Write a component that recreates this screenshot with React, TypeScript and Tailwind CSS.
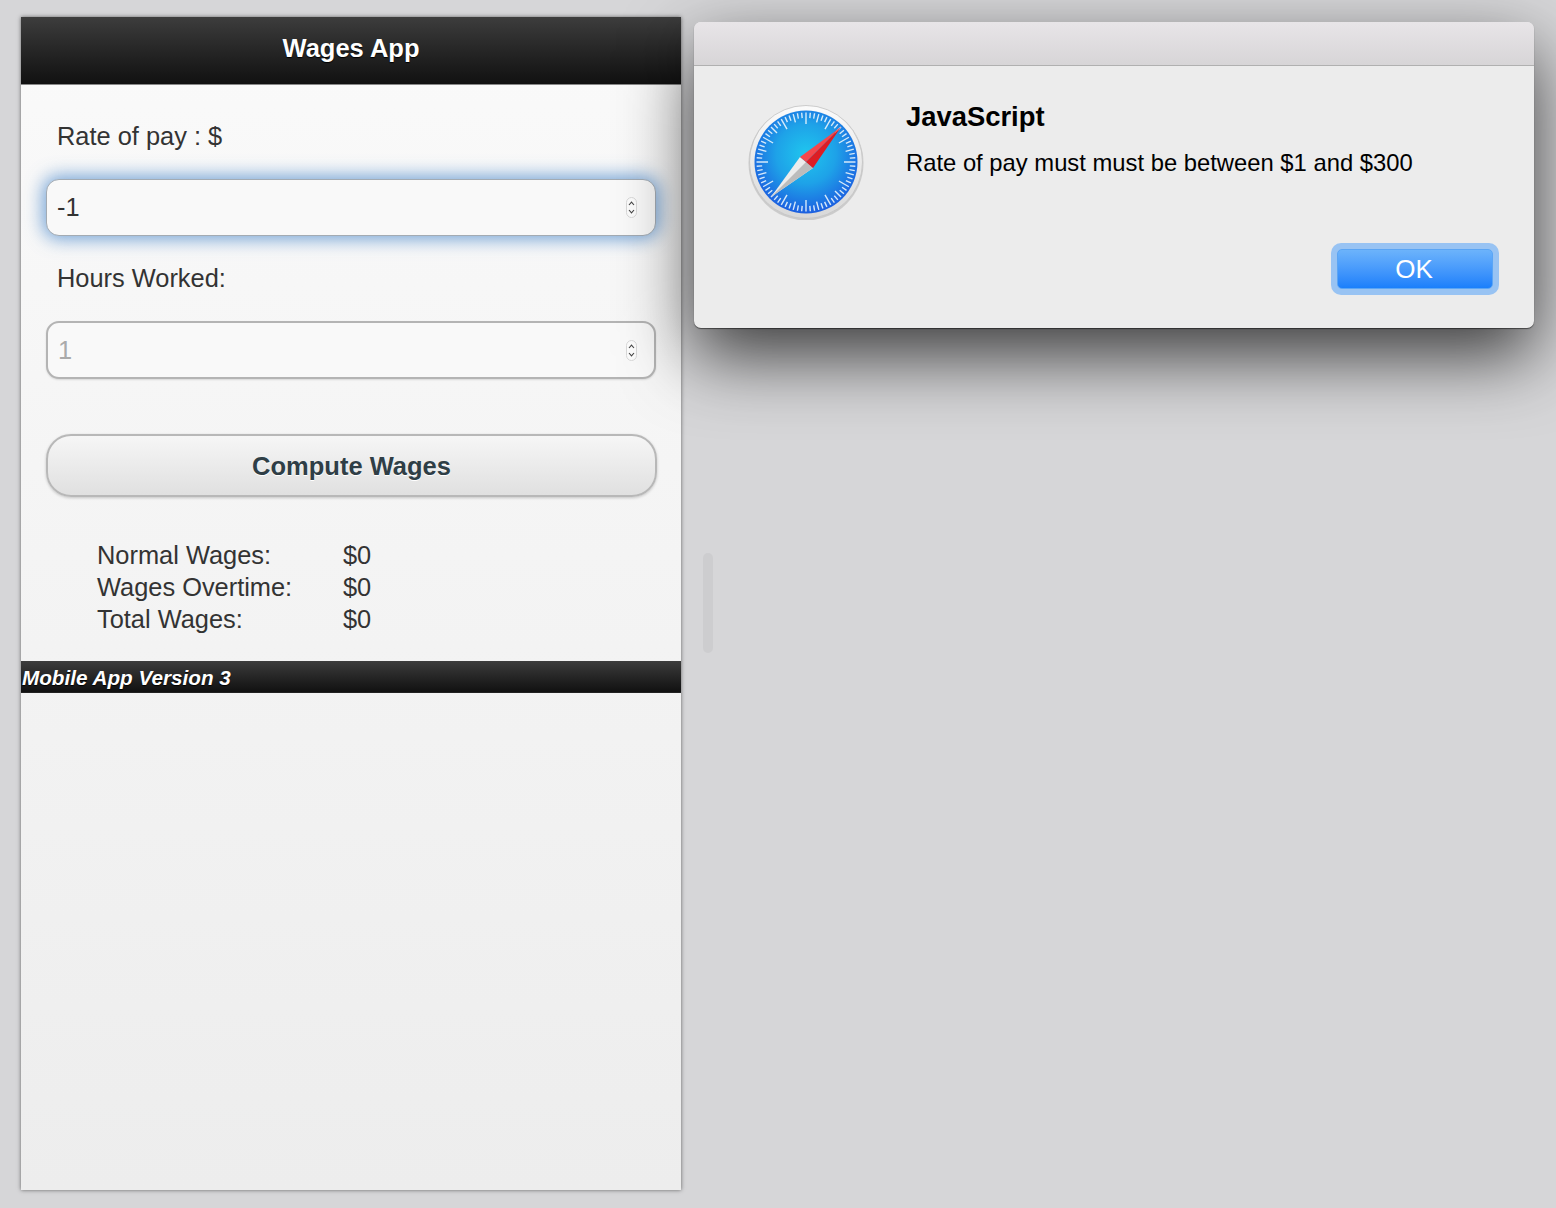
const font = "font-['Liberation_Sans',Arial,sans-serif]";

function Spinner() {
  return (
    <svg width="11" height="21" viewBox="0 0 11 21" className="shrink-0">
      <rect x="0.5" y="0.5" width="10" height="20" rx="5" fill="#fcfcfc" stroke="#d8d8d8" />
      <path d="M3 8 5.5 5.2 8 8" fill="none" stroke="#444" strokeWidth="1.1" />
      <path d="M3 13 5.5 15.8 8 13" fill="none" stroke="#444" strokeWidth="1.1" />
    </svg>
  );
}

function NumberField({ value, focused }: { value: string; focused?: boolean }) {
  return (
    <div
      className={
        focused
          ? "flex h-[57px] w-[610px] items-center justify-between rounded-[13px] border border-[#a3abb3] bg-[#f9f9f9] pl-[10px] pr-[18px] shadow-[0_0_18px_3px_rgba(80,140,205,0.8)]"
          : "flex h-[58px] w-[610px] items-center justify-between rounded-[13px] border-2 border-[#b4b4b4] bg-[#f9f9f9] pl-[10px] pr-[17px] shadow-[0_1px_2px_rgba(0,0,0,0.12)]"
      }
    >
      <span className={focused ? "text-[25.4px] text-[#333]" : "text-[25.4px] text-[#aaa]"}>{value}</span>
      <Spinner />
    </div>
  );
}

function Compass() {
  const ticks = Array.from({ length: 72 }, (_, i) => i * 5);
  return (
    <svg width="116" height="116" viewBox="0 0 116 116">
      <defs>
        <radialGradient id="dial" cx="50%" cy="42%" r="58%">
          <stop offset="0%" stopColor="#1fc6ee" />
          <stop offset="50%" stopColor="#1ea2e8" />
          <stop offset="100%" stopColor="#1c5fe0" />
        </radialGradient>
        <linearGradient id="rim" x1="0" y1="0" x2="0" y2="1">
          <stop offset="0%" stopColor="#fbfbfb" />
          <stop offset="100%" stopColor="#d8d8d8" />
        </linearGradient>
      </defs>
      <circle cx="58" cy="59" r="57.5" fill="#8f8f8f" opacity="0.35" />
      <circle cx="58" cy="58" r="56.5" fill="url(#rim)" stroke="#c4c4c4" strokeWidth="0.8" />
      <circle cx="58" cy="58" r="51.5" fill="url(#dial)" />
      {ticks.map((deg) => (
        <line
          key={deg}
          x1="58"
          y1="8.5"
          x2="58"
          y2={deg % 30 === 0 ? 20 : deg % 15 === 0 ? 17 : 14}
          stroke="#eaf5fc"
          strokeOpacity="0.9"
          strokeWidth="1.4"
          transform={`rotate(${deg} 58 58)`}
        />
      ))}
      <path d="M23 93 52 53 65 64Z" fill="#ececec" />
      <path d="M23 93 65 64 58 58Z" fill="#bcbcbc" />
      <path d="M93 23 52 53 58 58Z" fill="#f5474c" />
      <path d="M93 23 58 58 65 64Z" fill="#dc1d24" />
    </svg>
  );
}

function AlertDialog() {
  return (
    <div className="absolute left-[694px] top-[22px] flex h-[306px] w-[840px] flex-col overflow-hidden rounded-[7px] bg-[#ececec] shadow-[0_1px_1px_rgba(0,0,0,0.5),0_28px_70px_rgba(0,0,0,0.72)]">
      <div className="h-[44px] border-b border-[#b0b0b0] bg-gradient-to-b from-[#e8e5e8] to-[#d7d5d7]" />
      <div className="relative flex flex-1 pl-[54px] pt-[38px]">
        <Compass />
        <div className="-mt-[2px] ml-[42px]">
          <h2 className="text-[27.4px] font-bold leading-[30px] text-black">JavaScript</h2>
          <p className="mt-[17px] text-[23.8px] leading-[28px] text-black">Rate of pay must must be between $1 and $300</p>
        </div>
        <button className="absolute bottom-[33px] right-[35px] h-[52px] w-[168px] rounded-[10px] bg-[#98c3f3] p-[6px]">
          <span className="flex h-full w-full items-center justify-center rounded-[5px] border border-[#5aa5f5] bg-gradient-to-b from-[#6cb3fb] to-[#1a7ffb] pr-[2px] text-[26px] text-white">
            OK
          </span>
        </button>
      </div>
    </div>
  );
}

export default function App() {
  return (
    <div className={`${font} relative h-[1208px] w-[1556px] overflow-hidden bg-[#d6d6d8] pl-[21px] pt-[17px]`}>
      <div className="flex h-[1173px] w-[660px] flex-col bg-gradient-to-b from-[#fafafa] to-[#ededed] shadow-[0_0_4px_rgba(0,0,0,0.55)]">
        <header className="flex h-[68px] items-center justify-center border-b border-[#888] bg-gradient-to-b from-[#3d3d3d] to-[#111] pb-[5px]">
          <h1 className="text-[25.5px] font-bold text-white [text-shadow:0_1px_1px_#000]">Wages App</h1>
        </header>
        <div className="flex flex-col pl-[25px] pt-[36px]">
          <label className="pl-[11px] text-[25.4px] leading-[30px] text-[#333]">Rate of pay : $</label>
          <div className="mt-[28px]">
            <NumberField value="-1" focused />
          </div>
          <label className="mt-[27px] pl-[11px] text-[25.4px] leading-[30px] text-[#333]">Hours Worked:</label>
          <div className="mt-[28px]">
            <NumberField value="1" />
          </div>
          <button className="mt-[55px] h-[63px] w-[611px] rounded-[25px] border-2 border-[#b8b8b8] bg-gradient-to-b from-[#f6f6f6] to-[#e0e0e0] pt-[1px] text-[25.5px] font-bold text-[#2f3e46] shadow-[0_1px_3px_rgba(0,0,0,0.2)] [text-shadow:0_1px_0_#fff]">
            Compute Wages
          </button>
          <div className="ml-[51px] mt-[42px] grid grid-cols-[246px_auto] justify-start text-[25.4px] leading-[32px] text-[#333]">
            <span>Normal Wages:</span>
            <span>$0</span>
            <span>Wages Overtime:</span>
            <span>$0</span>
            <span>Total Wages:</span>
            <span>$0</span>
          </div>
        </div>
        <footer className="mt-[26px] flex h-[32px] items-center border-b border-[#222] bg-gradient-to-b from-[#3d3d3d] to-[#111] pl-[1px] pt-[2px]">
          <span className="text-[20.7px] font-bold italic text-white [text-shadow:0_1px_1px_#000]">Mobile App Version 3</span>
        </footer>
      </div>
      <div className="absolute left-[703px] top-[553px] h-[100px] w-[10px] rounded-[5px] bg-[#cdcdcf]" />
      <AlertDialog />
    </div>
  );
}
